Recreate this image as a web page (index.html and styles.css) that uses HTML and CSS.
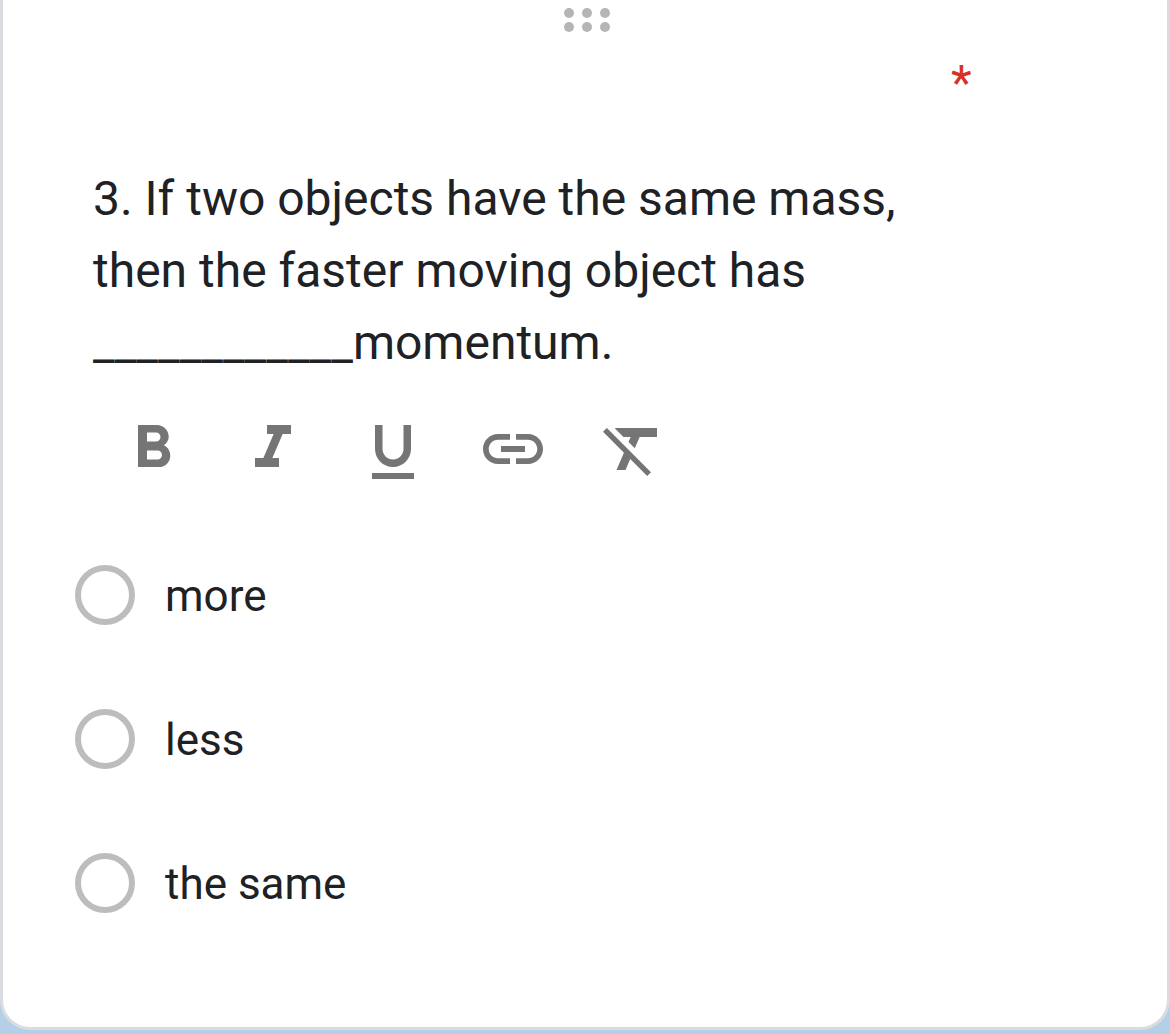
FILE: index.html
```html
<!DOCTYPE html>
<html lang="en">
<head>
    <meta charset="UTF-8">
    <meta name="viewport" content="width=device-width, initial-scale=1.0">
    <title>Question 3</title>
    <link rel="stylesheet" href="styles.css">
</head>
<body>
    <div class="card">
        <div class="drag">
            <span></span><span></span><span></span>
            <span></span><span></span><span></span>
        </div>
        <div class="required">*</div>
        <p class="question">3. If two objects have the same mass, then the faster moving object has ____________momentum.</p>
        <div class="toolbar">
            <svg class="icon" viewBox="0 0 24 24"><path d="M15.6 10.79c.97-.67 1.65-1.77 1.65-2.79 0-2.26-1.75-4-4-4H7v14h7.04c2.09 0 3.71-1.7 3.71-3.79 0-1.52-.86-2.82-2.15-3.42zM10 6.5h3c.83 0 1.5.67 1.5 1.5s-.67 1.5-1.5 1.5h-3v-3zm3.5 9H10v-3h3.5c.83 0 1.5.67 1.5 1.5s-.67 1.5-1.5 1.5z"/></svg>
            <svg class="icon" viewBox="0 0 24 24"><path d="M10 4v3h2.21l-3.42 8H6v3h8v-3h-2.21l3.42-8H18V4z"/></svg>
            <svg class="icon underline" viewBox="0 0 24 24"><path d="M12 17c3.31 0 6-2.69 6-6V3h-2.5v8c0 1.93-1.57 3.5-3.5 3.5S8.5 12.93 8.5 11V3H6v8c0 3.31 2.69 6 6 6zm-7 2v2h14v-2H5z"/></svg>
            <svg class="icon" viewBox="0 0 24 24"><path d="M3.9 12c0-1.71 1.39-3.1 3.1-3.1h4V7H7c-2.76 0-5 2.24-5 5s2.24 5 5 5h4v-1.9H7c-1.71 0-3.1-1.39-3.1-3.1zM8 13h8v-2H8v2zm9-6h-4v1.9h4c1.71 0 3.1 1.39 3.1 3.1s-1.39 3.1-3.1 3.1h-4V17h4c2.76 0 5-2.24 5-5s-2.24-5-5-5z"/></svg>
            <svg class="icon" viewBox="0 0 24 24"><path d="M3.27 5L2 6.27l6.97 6.97L6.5 19h3l1.57-3.66L16.73 21 18 19.73 3.55 5.27 3.27 5zM6 5v.18L8.82 8h2.4l-.72 1.68 2.1 2.1L14.21 8H20V5H6z"/></svg>
        </div>
        <div class="options">
            <div class="option"><span class="radio"></span><span class="label">more</span></div>
            <div class="option"><span class="radio"></span><span class="label">less</span></div>
            <div class="option"><span class="radio"></span><span class="label">the same</span></div>
        </div>
    </div>
</body>
</html>
```

FILE: styles.css
```css
*{
    padding: 0;
    margin: 0;
    box-sizing: border-box;
}
html, body{
    height: 100%;
}
body{
    background-color: #b3d0e8;
    font-family: Roboto, "Liberation Sans", sans-serif;
    color: #202124;
    overflow: hidden;
}
.card{
    height: 1030px;
    background-color: #fff;
    border-left: 3px solid #dadce0;
    border-right: 3px solid #dadce0;
    border-bottom: 3px solid #dadce0;
    border-radius: 0 0 30px 30px;
    padding-top: 8px;
}
.drag{
    width: 46px;
    margin-left: 561px;
    display: grid;
    grid-template-columns: repeat(3, 10px);
    justify-content: space-between;
    row-gap: 4px;
}
.drag span{
    height: 10px;
    border-radius: 50%;
    background-color: #b5b5b5;
}
.required{
    margin: 15px 0 0 948px;
    height: 72px;
    line-height: 72px;
    font-size: 48px;
    color: #d93025;
}
.question{
    width: 860px;
    margin: 44px 0 0 90px;
    font-size: 48px;
    line-height: 72px;
}
.toolbar{
    display: flex;
    gap: 48px;
    margin: 0 0 0 114px;
    padding-top: 34px;
    height: 106px;
}
.icon{
    width: 72px;
    height: 72px;
    fill: #757575;
    display: block;
}
.underline{
    margin-top: 3px;
}
.options{
    margin: 80px 0 0 72px;
    display: flex;
    flex-direction: column;
    gap: 84px;
}
.option{
    display: flex;
    align-items: center;
    gap: 30px;
    height: 60px;
}
.radio{
    width: 60px;
    height: 60px;
    border: 6px solid #bdbdbd;
    border-radius: 50%;
}
.label{
    font-size: 44px;
    padding-top: 2px;
}
```
